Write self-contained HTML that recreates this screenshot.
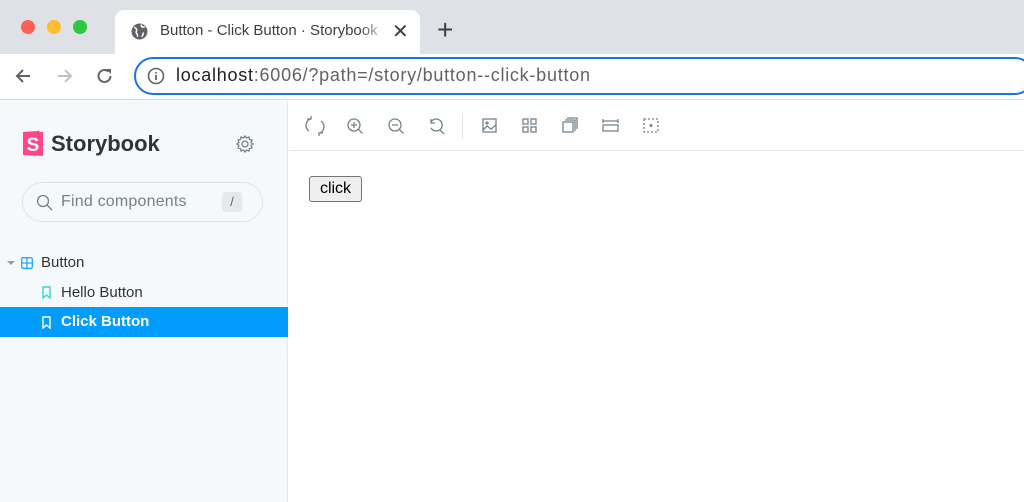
<!DOCTYPE html>
<html><head><style>
*{margin:0;padding:0;box-sizing:border-box}
body{width:1024px;height:502px;overflow:hidden;font-family:"Liberation Sans",sans-serif;background:#fff;position:relative}
.a{position:absolute}
.ic{stroke:#73828c;fill:none;stroke-width:1.3}
</style></head><body>
<div class="a" style="left:0;top:0;width:1024px;height:54px;background:#dee1e6"></div>
<div class="a" style="left:21px;top:20px;width:14px;height:14px;border-radius:50%;background:#fe5f57"></div>
<div class="a" style="left:47px;top:20px;width:14px;height:14px;border-radius:50%;background:#febc2e"></div>
<div class="a" style="left:73px;top:20px;width:14px;height:14px;border-radius:50%;background:#28c840"></div>
<div class="a" style="left:115px;top:10px;width:305px;height:46px;background:#fff;border-radius:9px 9px 0 0"></div>
<svg class="a" style="left:131px;top:23px" width="17" height="17" viewBox="0 0 16 16"><circle cx="8" cy="8" r="7.5" fill="#5f6368"/><path d="M3 4c2 1 3 2 2 4s2 2 1 5M10 1.5c-1 2 1 3 3 2M11 9c1 1 0 3-1 4" stroke="#fff" stroke-width="1.4" fill="none"/></svg>
<div class="a" style="left:160px;top:22px;font-size:15px;color:#3c4043;white-space:nowrap;width:228px;overflow:hidden">Button - Click Button · Storybook</div>
<div class="a" style="left:360px;top:18px;width:28px;height:24px;background:linear-gradient(to right,rgba(255,255,255,0),#fff)"></div>
<div class="a" style="left:392px;top:19px;font-size:20px;color:#3c4043">✕</div>
<div class="a" style="left:437px;top:14px;font-size:28px;color:#3c4043">+</div>
<div class="a" style="left:0;top:54px;width:1024px;height:46px;background:#fff;border-bottom:1px solid #dadce0"></div>
<svg class="a" style="left:13px;top:66px" width="20" height="20" viewBox="0 0 20 20"><path d="M17 10H4M10 4l-6 6 6 6" stroke="#5f6368" stroke-width="2" fill="none"/></svg>
<svg class="a" style="left:55px;top:66px" width="20" height="20" viewBox="0 0 20 20"><path d="M3 10h13M10 4l6 6-6 6" stroke="#bdc1c6" stroke-width="2" fill="none"/></svg>
<svg class="a" style="left:95px;top:66px" width="20" height="20" viewBox="0 0 20 20"><path d="M15.5 10a6 6 0 1 1-2-4.5" stroke="#5f6368" stroke-width="2" fill="none"/><path d="M11 3h5v5z" fill="#5f6368"/></svg>
<div class="a" style="left:134px;top:57px;width:900px;height:38px;border:2.5px solid #1a73e8;border-radius:19px"></div>
<svg class="a" style="left:147px;top:67px" width="18" height="18" viewBox="0 0 18 18"><circle cx="9" cy="9" r="7.5" stroke="#5f6368" stroke-width="1.6" fill="none"/><path d="M9 8v5M9 5v1.5" stroke="#5f6368" stroke-width="1.8"/></svg>
<div class="a" style="left:176px;top:65px;font-size:18px;letter-spacing:0.75px;color:#5f6368;white-space:nowrap"><span style="color:#202124">localhost</span>:6006/?path=/story/button--click-button</div>
<div class="a" style="left:0;top:100px;width:288px;height:402px;background:#f6f9fc;border-right:1px solid #e6e9ec"></div>
<svg class="a" style="left:22px;top:130px" width="22" height="27" viewBox="0 0 22 27"><path d="M1 2l15-1 1-1 .5 2H21v24L1 25z" fill="#ff4785"/><text x="11" y="21" font-family="Liberation Sans" font-weight="bold" font-size="19" fill="#fff" text-anchor="middle">S</text></svg>
<div class="a" style="left:51px;top:131px;font-size:22px;font-weight:bold;color:#333">Storybook</div>
<svg class="a" style="left:235px;top:134px" width="20" height="20" viewBox="0 0 20 20"><circle cx="10" cy="10" r="3" class="ic"/><path d="M10 2l1.5 2 2.5-1 .5 2.5 2.5.5-1 2.5 2 1.5-2 1.5 1 2.5-2.5.5-.5 2.5-2.5-1-1.5 2-1.5-2-2.5 1-.5-2.5-2.5-.5 1-2.5-2-1.5 2-1.5-1-2.5 2.5-.5.5-2.5 2.5 1z" class="ic"/></svg>
<div class="a" style="left:22px;top:182px;width:241px;height:40px;border:1px solid #dfe3e7;border-radius:20px"></div>
<svg class="a" style="left:36px;top:194px" width="17" height="17" viewBox="0 0 17 17"><circle cx="7" cy="7" r="5.5" class="ic"/><path d="M11 11l5 5" class="ic"/></svg>
<div class="a" style="left:61px;top:193px;font-size:16px;letter-spacing:0.2px;color:#73828c">Find components</div>
<div class="a" style="left:222px;top:192px;width:20px;height:20px;background:#e6e9ec;border-radius:3px;font-size:13px;color:#5c6870;text-align:center;line-height:20px">/</div>
<div class="a" style="left:7px;top:261px;width:0;height:0;border-left:4px solid transparent;border-right:4px solid transparent;border-top:4px solid #999"></div>
<svg class="a" style="left:21px;top:257px" width="12" height="12" viewBox="0 0 12 12"><rect x=".7" y=".7" width="10.6" height="10.6" rx="1.5" stroke="#1ea7fd" fill="none" stroke-width="1.3"/><path d="M6 1v10M1 6h10" stroke="#1ea7fd" stroke-width="1.3"/></svg>
<div class="a" style="left:41px;top:254px;font-size:15px;color:#333">Button</div>
<svg class="a" style="left:42px;top:286px" width="9" height="13" viewBox="0 0 9 13"><path d="M1 1h7v11l-3.5-3L1 12z" stroke="#37d5d3" fill="none" stroke-width="1.4"/></svg>
<div class="a" style="left:61px;top:284px;font-size:15px;color:#333">Hello Button</div>
<div class="a" style="left:0;top:307px;width:288px;height:30px;background:#029cfd"></div>
<svg class="a" style="left:42px;top:316px" width="9" height="13" viewBox="0 0 9 13"><path d="M1 1h7v11l-3.5-3L1 12z" stroke="#fff" fill="none" stroke-width="1.4"/></svg>
<div class="a" style="left:61px;top:313px;font-size:15px;font-weight:bold;color:#fff">Click Button</div>
<div class="a" style="left:289px;top:150px;width:735px;height:1px;background:#e2e6ea"></div>
<div class="a" style="left:462px;top:113px;width:1px;height:26px;background:#e2e6ea"></div>
<svg class="a" style="left:300px;top:110px" width="370" height="32" viewBox="0 0 370 32">
<g class="ic" stroke-width="1.4">
<path d="M10 9a7 7 0 0 0 -1 12M20 23a7 7 0 0 0 1-12M7 9h4v-3M23 23h-4v3"/>
<circle cx="54" cy="15" r="6"/><path d="M58.5 19.5l4 4M51 15h6M54 12v6"/>
<circle cx="95" cy="15" r="6"/><path d="M99.5 19.5l4 4M92 15h6"/>
<path d="M131 12a6 6 0 1 1 0 6M131 9v4h4M140 20l4 4"/>
<rect x="183" y="9" width="13" height="13"/><path d="M183 20l4-4 4 3 5-4"/><circle cx="187" cy="13" r="1"/>
<rect x="223" y="9" width="5" height="5"/><rect x="231" y="9" width="5" height="5"/><rect x="223" y="17" width="5" height="5"/><rect x="231" y="17" width="5" height="5"/>
<rect x="263" y="12" width="10" height="10"/><path d="M265 10h10v11M267 8h10v11"/>
<path d="M303 9v4M318 9v4M303 11h15"/><rect x="303" y="15" width="15" height="6"/>
<rect x="344" y="9" width="14" height="13" stroke-dasharray="2 2"/><circle cx="351" cy="15.5" r=".8" fill="#73828c"/>
</g></svg>
<div class="a" style="left:309px;top:176px;width:53px;height:26px;background:#efefef;border:1px solid #767676;border-radius:3px;font-size:16px;text-align:center;line-height:24px;color:#000">click</div>
</body></html>
